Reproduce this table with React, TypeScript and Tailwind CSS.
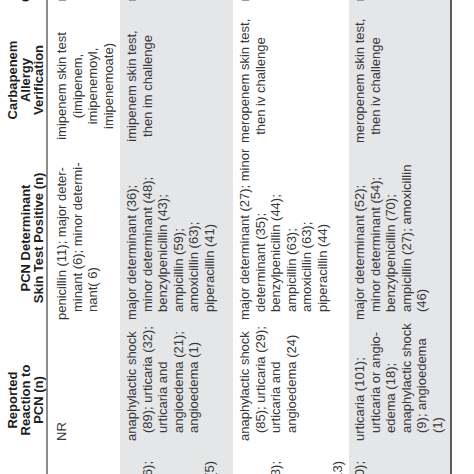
import React from 'react';

// The table is printed on its side: it is laid out normally and turned a quarter turn.
type Row = {
  shade: boolean;
  height: string;
  pad: string;
  study: string[];
  reaction: string[];
  positive: string[];
  carbapenem: string[];
  outcome: string[];
};

const rows: Row[] = [
  {
    shade: false,
    height: 'h-[72px]',
    pad: 'pt-[6px]',
    study: [''],
    reaction: ['NR'],
    positive: ['penicillin (11); major deter-', 'minant (6); minor determi-', 'nant( 6)'],
    carbapenem: ['imipenem skin test', '(imipenem,', 'imipenemoyl,', 'imipenemoate)'],
    outcome: ['negative'],
  },
  {
    shade: true,
    height: 'h-[113px]',
    pad: 'pt-[4px]',
    study: ['', '(n = 106);', '', '', '', '(5)'],
    reaction: ['anaphylactic shock', '(89); urticaria (32);', 'urticaria and', 'angioedema (21);', 'angioedema (1)'],
    positive: [
      'major determinant (36);',
      'minor determinant (48);',
      'benzylpenicillin (43);',
      'ampicillin (59);',
      'amoxicillin (63);',
      'piperacillin (41)',
    ],
    carbapenem: ['imipenem skin test,', 'then im challenge'],
    outcome: ['negative'],
  },
  {
    shade: false,
    height: 'h-[116px]',
    pad: 'pt-[4px]',
    study: ['', '', '(n = 103);', '', '', '', '(2013)'],
    reaction: ['anaphylactic shock', '(85); urticaria (29);', 'urticaria and', 'angioedema (24)'],
    positive: [
      'major determinant (27); minor',
      'determinant (35);',
      'benzylpenicillin (44);',
      'ampicillin (63);',
      'amoxicillin (63);',
      'piperacillin (44)',
    ],
    carbapenem: ['meropenem skin test,', 'then iv challenge'],
    outcome: ['negative'],
  },
  {
    shade: true,
    height: 'h-[103px] border-b-2 border-[#5c5c5c]',
    pad: 'pt-[3px]',
    study: ['(n = 110);'],
    reaction: ['urticaria (101);', 'urticaria or angio-', 'edema (18);', 'anaphylactic shock', '(9); angioedema', '(1)'],
    positive: [
      'major determinant (52);',
      'minor determinant (54);',
      'benzylpenicillin (70);',
      'ampicillin (27); amoxicillin',
      '(46)',
    ],
    carbapenem: ['meropenem skin test,', 'then iv challenge'],
    outcome: ['negative'],
  },
];

const Lines = ({lines, hang}: {lines: string[]; hang?: boolean}) => (
  <>
    {lines.map((line, i) => (
      <div key={i} className={`whitespace-nowrap ${hang && i > 0 ? 'pl-[8px]' : ''}`}>
        {line || '\u00a0'}
      </div>
    ))}
  </>
);

export default function App() {
  return (
    <div className="w-[474px] h-[474px] overflow-hidden bg-white">
      <div className="w-[474px] h-[474px] -rotate-90">
        <div className="ml-[-150px] w-[760px] font-['Liberation_Sans',Arial,sans-serif] text-[13px] leading-[15.5px] text-[#383838]">
          {/* header */}
          <div className="flex h-[48px] items-end border-b-2 border-[#8c8c8c] pb-[1px] text-[13px] leading-[13px] font-bold text-[#1e1e1e]">
            <div className="w-[178px] shrink-0" />
            <div className="w-[92px] shrink-0 text-center">
              <div>Reported</div>
              <div>Reaction to</div>
              <div>PCN (n)</div>
            </div>
            <div className="w-[232px] shrink-0 text-center">
              <div>PCN Determinant</div>
              <div className="whitespace-nowrap">Skin Test Positive (n)</div>
            </div>
            <div className="w-[84px] shrink-0 text-center">
              <div>Carbapenem</div>
              <div>Allergy</div>
              <div>Verification</div>
            </div>
            <div className="pl-[36px] whitespace-nowrap">
              <div>Outcome</div>
              <div>&nbsp;</div>
            </div>
          </div>

          {/* body */}
          {rows.map((row, i) => (
            <div key={i} className={`flex ${row.height} ${row.pad} ${row.shade ? 'bg-[#e5e6e8]' : 'bg-white'}`}>
              <div className="w-[178px] shrink-0 pr-[15px] text-right">
                <Lines lines={row.study} />
              </div>
              <div className="w-[121px] shrink-0 pl-[5px]">
                <Lines lines={row.reaction} hang />
              </div>
              <div className="w-[182px] shrink-0 pl-[5px]">
                <Lines lines={row.positive} hang />
              </div>
              <div className="w-[135px] shrink-0 pr-[21px] text-center">
                <Lines lines={row.carbapenem} />
              </div>
              <div className="pl-[6px] text-[#9a9a9a]">
                <Lines lines={row.outcome} />
              </div>
            </div>
          ))}
        </div>
      </div>
    </div>
  );
}
